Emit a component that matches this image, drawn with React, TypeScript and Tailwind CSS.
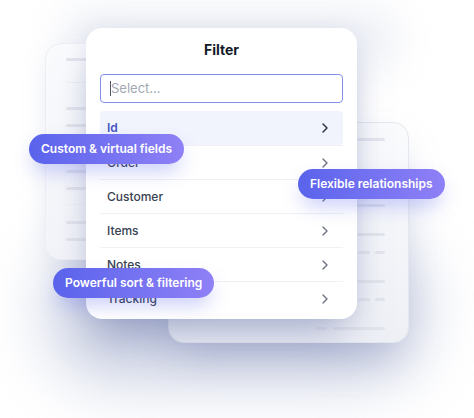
import { ChevronRight } from 'lucide-react';

const rows = ['Id', 'Order', 'Customer', 'Items', 'Notes', 'Tracking'];

function Bar({ w, className = '' }: { w: string; className?: string }) {
  return <div className={`h-[3px] rounded-full bg-[#e3e5ec] ${w} ${className}`} />;
}

function Badge({ label, className }: { label: string; className: string }) {
  return (
    <div
      className={`absolute h-[30px] px-[12px] flex items-center rounded-full bg-gradient-to-r from-[#5a63ec] to-[#8f80f6] text-white text-[12px] font-semibold shadow-[0_10px_20px_-4px_rgba(90,99,236,0.35)] whitespace-nowrap ${className}`}
    >
      {label}
    </div>
  );
}

export default function App() {
  return (
    <div className="relative w-[474px] h-[418px] overflow-hidden bg-white font-['Inter',sans-serif]">
      {/* soft ambient shadow under the stack */}
      <div className="absolute left-[50px] top-[240px] w-[370px] h-[140px] rounded-[60px] bg-[#bcc3db]/80 blur-[32px]" />
      <div className="absolute left-[60px] top-[10px] w-[340px] h-[60px] rounded-full bg-[#eef0f6] blur-[20px]" />

      {/* back card, left */}
      <div className="absolute left-[45px] top-[43px] w-[200px] h-[217px] rounded-[16px] border border-[#eceef4] bg-gradient-to-b from-[#fafbfd] to-[#f3f4f9] shadow-[0_10px_30px_-8px_rgba(140,150,190,0.3)]">
        <div className="flex flex-col pl-[20px] pt-[14px]">
          <Bar w="w-[60px]" />
          <div className="h-px bg-[#eef0f4] mt-[21px] mr-4" />
          <Bar w="w-[60px]" className="mt-[24px]" />
          <Bar w="w-[40px]" className="mt-[14px]" />
          <div className="h-px bg-[#eef0f4] mt-[20px] mr-4" />
          <Bar w="w-[60px]" className="mt-[22px]" />
          <Bar w="w-[30px]" className="mt-[14px]" />
          <div className="h-px bg-[#eef0f4] mt-[14px] mr-4" />
          <Bar w="w-[60px]" className="mt-[16px]" />
          <Bar w="w-[40px]" className="mt-[14px]" />
        </div>
      </div>

      {/* back card, right */}
      <div className="absolute left-[168px] top-[122px] w-[241px] h-[221px] rounded-[16px] border border-[#e4e7ef] bg-gradient-to-b from-[#fafbfd] to-[#eef0f6] shadow-[0_20px_40px_-10px_rgba(130,140,185,0.4)]">
        <div className="flex flex-col items-end pr-[23px] pt-[15px]">
          <Bar w="w-[28px]" />
          <Bar w="w-[28px]" className="mt-[63px]" />
          <Bar w="w-[28px]" className="mt-[26px]" />
          <div className="flex gap-[5px] mt-[15px]">
            <Bar w="w-[12px]" />
            <Bar w="w-[10px]" />
          </div>
          <Bar w="w-[28px]" className="mt-[26px]" />
          <div className="flex gap-[5px] mt-[15px]">
            <Bar w="w-[12px]" />
            <Bar w="w-[10px]" />
          </div>
          <div className="flex gap-[6px] mt-[26px]">
            <Bar w="w-[12px]" />
            <Bar w="w-[52px]" />
          </div>
        </div>
      </div>

      {/* main filter card */}
      <div className="absolute left-[86px] top-[28px] w-[271px] h-[291px] rounded-[16px] bg-white shadow-[0_24px_40px_-12px_rgba(110,120,170,0.55),0_0_20px_rgba(180,186,210,0.25)] px-[14px] pt-[12px]">
        <div className="text-center text-[14px] leading-[20px] font-bold text-[#111827]">Filter</div>
        <div className="mt-[14px] h-[29px] rounded-[4px] border-[1.5px] border-[#8390ea] flex items-center pl-[9px]">
          <div className="w-px h-[15px] bg-[#4b5563]" />
          <span className="text-[13px] text-[#a3a8b3]">Select...</span>
        </div>
        <div className="mt-[8px] flex flex-col">
          {rows.map((r, i) => (
            <div
              key={r}
              className={`h-[34px] flex items-center justify-between pl-[7px] pr-[10px] ${
                i === 0 ? 'bg-[#f1f4fd] rounded-[4px]' : 'border-t border-[#eff1f4]'
              }`}
            >
              <span className={`text-[12px] ${i === 0 ? 'text-[#4453c4] font-semibold' : 'text-[#374151] font-medium'}`}>{r}</span>
              <ChevronRight size={16} strokeWidth={2} className={i === 0 ? 'text-[#1f2937]' : 'text-[#6b7280]'} />
            </div>
          ))}
        </div>
      </div>

      <Badge label="Custom & virtual fields" className="left-[29px] top-[134px]" />
      <Badge label="Flexible relationships" className="left-[298px] top-[169px]" />
      <Badge label="Powerful sort & filtering" className="left-[53px] top-[268px]" />
    </div>
  );
}
